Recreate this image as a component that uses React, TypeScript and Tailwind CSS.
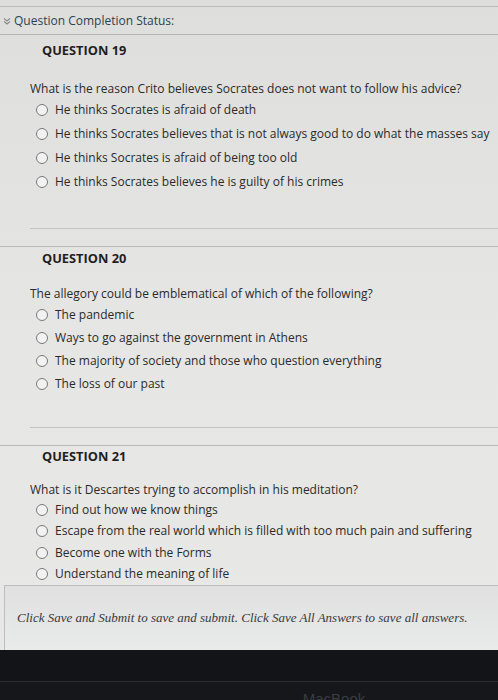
import React from "react";

const sans = { fontFamily: '"Open Sans", "Noto Sans", sans-serif' };

function Radio() {
  return (
    <span className="inline-block w-[12px] h-[12px] rounded-full border border-[#7a7a7a] bg-[#f2f2f2] shrink-0" />
  );
}

function Option({ text, h }: { text: string; h: string }) {
  return (
    <div className={`flex items-center pl-[36px] gap-[7px] ${h}`}>
      <Radio />
      <span className="text-[12px] text-[#2a2a2a] whitespace-nowrap leading-none">{text}</span>
    </div>
  );
}

function Heading({ label, pt }: { label: string; pt: string }) {
  return (
    <div className={`${pt} pl-[42px] h-[16px] box-content flex items-center`}>
      <span className="text-[12.8px] font-bold text-[#1f1f1f]">{label}</span>
    </div>
  );
}

export default function App() {
  return (
    <div
      className="w-[498px] h-[700px] overflow-hidden flex flex-col bg-gradient-to-b from-[#dedfdd] via-[#e6e6e4] to-[#e8e8e6]"
      style={sans}
    >
      <div className="h-[6px]" />
      <div className="border-t border-[#b9b9b9]" />
      <div className="h-[27px] flex items-center pl-[3px] gap-[3px]">
        <svg width="8" height="8" viewBox="0 0 8 8" className="mt-[1px]">
          <path d="M1 1.5 L4 4 L7 1.5" stroke="#8a8a8a" strokeWidth="1.1" fill="none" />
          <path d="M1 4.5 L4 7 L7 4.5" stroke="#8a8a8a" strokeWidth="1.1" fill="none" />
        </svg>
        <span className="text-[12px] text-[#2d4250]">Question Completion Status:</span>
      </div>
      <div className="border-t border-[#b5b5b5]" />

      {/* Question 19 */}
      <Heading label="QUESTION 19" pt="pt-[8px]" />
      <div className="h-[21px]" />
      <div className="h-[18px] flex items-center pl-[30px]">
        <span className="text-[12px] text-[#2a2a2a] whitespace-nowrap">
          What is the reason Crito believes Socrates does not want to follow his advice?
        </span>
      </div>
      <Option h="h-[24px]" text="He thinks Socrates is afraid of death" />
      <Option h="h-[24px]" text="He thinks Socrates believes that is not always good to do what the masses say" />
      <Option h="h-[24px]" text="He thinks Socrates is afraid of being too old" />
      <Option h="h-[24px]" text="He thinks Socrates believes he is guilty of his crimes" />
      <div className="h-[34px]" />
      <div className="ml-[30px] border-t border-[#c4c4c4]" />
      <div className="h-[17px]" />
      <div className="border-t border-[#b9b9b9]" />

      {/* Question 20 */}
      <Heading label="QUESTION 20" pt="pt-[4px]" />
      <div className="h-[18px]" />
      <div className="h-[18px] flex items-center pl-[30px]">
        <span className="text-[12px] text-[#2a2a2a] whitespace-nowrap">
          The allegory could be emblematical of which of the following?
        </span>
      </div>
      <Option h="h-[23px]" text="The pandemic" />
      <Option h="h-[23px]" text="Ways to go against the government in Athens" />
      <Option h="h-[23px]" text="The majority of society and those who question everything" />
      <Option h="h-[23px]" text="The loss of our past" />
      <div className="h-[32px]" />
      <div className="ml-[30px] border-t border-[#c4c4c4]" />
      <div className="h-[17px]" />
      <div className="border-t border-[#b9b9b9]" />

      {/* Question 21 */}
      <Heading label="QUESTION 21" pt="pt-[3px]" />
      <div className="h-[16px]" />
      <div className="h-[18px] flex items-center pl-[30px]">
        <span className="text-[12px] text-[#2a2a2a] whitespace-nowrap">
          What is it Descartes trying to accomplish in his meditation?
        </span>
      </div>
      <Option h="h-[21.5px]" text="Find out how we know things" />
      <Option h="h-[21.5px]" text="Escape from the real world which is filled with too much pain and suffering" />
      <Option h="h-[21.5px]" text="Become one with the Forms" />
      <Option h="h-[21.5px]" text="Understand the meaning of life" />

      {/* Footer box */}
      <div className="ml-[4px] h-[65px] border-t border-l border-[#bdbdbd] bg-gradient-to-b from-[#dfe0df] to-[#e9eaea] flex items-center pl-[12px]">
        <span
          className="italic text-[13px] text-[#3a3a3a] whitespace-nowrap"
          style={{ fontFamily: '"Liberation Serif", "DejaVu Serif", serif' }}
        >
          Click Save and Submit to save and submit. Click Save All Answers to save all answers.
        </span>
      </div>

      {/* Laptop bezel */}
      <div className="flex-1 bg-[#111317] flex flex-col">
        <div className="h-[31px] bg-[#121418]" />
        <div className="border-t border-[#2a2d31]" />
        <div className="flex-1 bg-[#15171b] flex justify-center items-end overflow-hidden">
          <span className="text-[15px] text-[#3a3c40] leading-none translate-y-[6px] translate-x-[85px]" style={{ fontFamily: '"Liberation Sans", sans-serif' }}>
            MacBook
          </span>
        </div>
      </div>
    </div>
  );
}
